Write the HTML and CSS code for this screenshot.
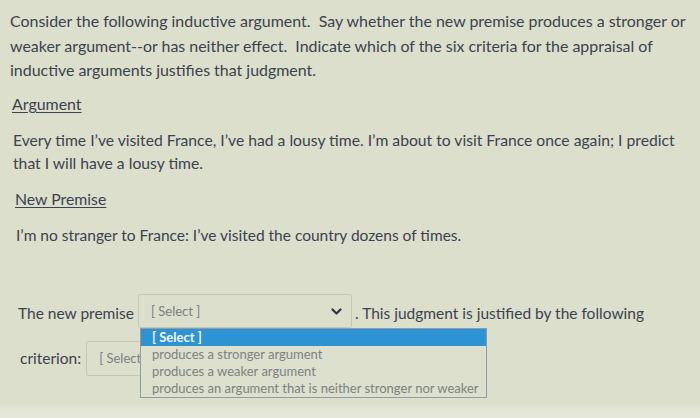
FILE: index.html
```html
<!DOCTYPE html>
<html>
<head>
<meta charset="utf-8">
<link rel="stylesheet" href="styles.css">
</head>
<body>
<div class="page">
  <p class="intro">Consider the following inductive argument.&nbsp; Say whether the new premise produces a stronger or weaker argument--or has neither effect.&nbsp; Indicate which of the six criteria for the appraisal of inductive arguments justifies that judgment.</p>
  <p class="heading h-arg">Argument</p>
  <p class="body-text arg">Every time I’ve visited France, I’ve had a lousy time. I’m about to visit France once again; I predict that I will have a lousy time.</p>
  <p class="heading h-new">New Premise</p>
  <p class="body-text prem">I’m no stranger to France: I’ve visited the country dozens of times.</p>

  <div class="answer">
    <div class="row row-one">
      <span class="label">The new premise</span>
      <div class="select select-one">
        <span class="select-text">[ Select ]</span>
        <svg class="chev" width="11" height="8" viewBox="0 0 11 8"><path d="M1.5 1.5 L5.5 5.5 L9.5 1.5" fill="none" stroke="#2f3440" stroke-width="2.2" stroke-linecap="round" stroke-linejoin="round"/></svg>
        <ul class="options">
          <li class="opt active">[ Select ]</li>
          <li class="opt">produces a stronger argument</li>
          <li class="opt">produces a weaker argument</li>
          <li class="opt">produces an argument that is neither stronger nor weaker</li>
        </ul>
      </div>
      <span class="label after">. This judgment is justified by the following</span>
    </div>
    <div class="row row-two">
      <span class="label">criterion:</span>
      <div class="select select-two">
        <span class="select-text">[ Select ]</span>
      </div>
    </div>
  </div>
</div>
</body>
</html>
```

FILE: styles.css
```css
html, body {
  margin: 0;
  padding: 0;
}
body {
  background: linear-gradient(to bottom, #dcdfcb 0, #dcdfcb 404px, #e4e6d6 410px, #e6e8da 418px);
  font-family: Lato, "Noto Sans", sans-serif;
  color: #3b4250;
  width: 700px;
  height: 418px;
  overflow: hidden;
}
.page {
  padding: 9px 0 0 10px;
}
p {
  margin: 0;
  font-size: 15.95px;
  line-height: 24.5px;
}
.intro {
  width: 686px;
}
.heading {
  text-decoration: underline;
  text-underline-offset: 2px;
  text-decoration-thickness: 1px;
  line-height: 24px;
}
.h-arg {
  margin-top: 9px;
  padding-left: 2px;
}
.arg {
  margin-top: 13px;
  padding-left: 3px;
  width: 680px;
  font-size: 15.7px;
  line-height: 23.5px;
}
.h-new {
  margin-top: 11px;
  padding-left: 5px;
  font-size: 15.8px;
}
.prem {
  margin-top: 12px;
  padding-left: 6px;
  font-size: 15.5px;
  line-height: 24px;
}
.answer {
  margin-top: 47px;
  padding-left: 8px;
}
.row {
  display: flex;
  align-items: center;
  font-size: 15.5px;
  line-height: 24px;
}
.row-one .label {
  position: relative;
  top: 2px;
}
.row-two {
  margin-top: 13px;
  padding-left: 2px;
}
.select {
  position: relative;
  height: 34px;
  box-sizing: border-box;
  border: 1px solid #c4c8b6;
  border-radius: 2px;
  display: flex;
  align-items: center;
}
.select-one {
  width: 214px;
  margin-left: 4px;
}
.select-two {
  width: 210px;
  margin-left: 5px;
  height: 35px;
}
.select-text {
  font-size: 13px;
  color: #7a7f86;
  padding-left: 12px;
}
.chev {
  position: absolute;
  right: 9px;
  top: 13px;
}
.after {
  margin-left: 3px;
}
.options {
  position: absolute;
  left: 1px;
  top: calc(100% + 1px);
  width: 347px;
  margin: 0;
  padding: 0;
  list-style: none;
  border: 1px solid #8f9ba6;
  background: #dde0cd;
  z-index: 5;
  box-sizing: border-box;
}
.opt {
  font-size: 13px;
  line-height: 17px;
  padding-left: 11px;
  color: #7c8183;
  white-space: nowrap;
}
.opt.active {
  background: #2d93d3;
  color: #f2f6f8;
  font-weight: 700;
}
```
